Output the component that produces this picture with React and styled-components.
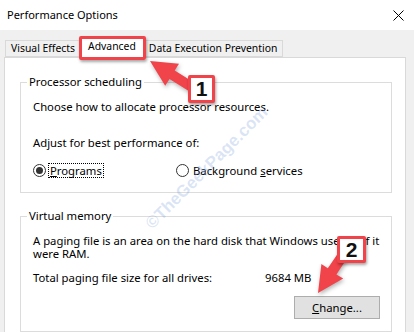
import React from 'react';
import styled, { createGlobalStyle } from 'styled-components';

const GlobalStyle = createGlobalStyle`
  html, body {
    margin: 0;
    padding: 0;
    background: #f0f0f0;
  }
  body {
    font-family: "Segoe UI", "Noto Sans", "Liberation Sans", sans-serif;
    font-size: 11.3px;
    color: #000;
  }
`;

const RED = '#f0434a';

const Window = styled.div`
  position: relative;
  width: 414px;
  height: 332px;
  overflow: hidden;
  display: flex;
  flex-direction: column;
  background: #f0f0f0;
`;

const TitleBar = styled.header`
  height: 30px;
  flex: none;
  display: flex;
  align-items: center;
  justify-content: space-between;
  padding: 0 10px 0 7px;
  background: #fff;
  font-size: 11px;
  line-height: 16px;
`;

const Body = styled.div`
  flex: 1;
  display: flex;
  flex-direction: column;
  padding: 7px 8px 0 4px;
`;

const TabStrip = styled.div`
  display: flex;
  align-items: flex-end;
  height: 20px;
  padding-left: 1px;
`;

const Tab = styled.div`
  position: relative;
  box-sizing: border-box;
  height: ${p => (p.$active ? '21px' : '17px')};
  margin-bottom: ${p => (p.$active ? '-1px' : '0')};
  padding: ${p => (p.$active ? '1px 7px 0' : '0 5px')};
  margin-left: ${p => (p.$active ? '-1px' : '0')};
  margin-right: ${p => (p.$active ? '-1px' : '0')};
  z-index: ${p => (p.$active ? 1 : 0)};
  border: 1px solid #d9d9d9;
  border-bottom: ${p => (p.$active ? 'none' : '1px solid #d9d9d9')};
  background: ${p => (p.$active ? '#fff' : '#f0f0f0')};
  font-size: 10.4px;
  line-height: 15px;
  white-space: nowrap;
`;

const Panel = styled.section`
  flex: 1;
  display: flex;
  flex-direction: column;
  padding: 16px 13px 0 15px;
  background: #fff;
  border: 1px solid #d9d9d9;
  border-bottom: none;
`;

const GroupBox = styled.fieldset`
  margin: ${p => p.$gap}px 0 0;
  padding: 0 11px ${p => p.$pb}px 6px;
  border: 1px solid #dcdcdc;
  min-width: 0;
`;

const GroupLegend = styled.legend`
  padding: 0 2px;
  line-height: 16px;
`;

const GroupContent = styled.div`
  padding-left: 6px;
`;

const Line = styled.div`
  margin-top: ${p => p.$mt || 0}px;
  line-height: ${p => p.$lh || 16}px;
  white-space: nowrap;
`;

const RadioRow = styled.div`
  display: flex;
  margin-top: 11px;
  height: 16px;
  align-items: center;
`;

const RadioOption = styled.label`
  display: flex;
  align-items: center;
  width: 143px;
`;

const RadioCircle = styled.span`
  box-sizing: border-box;
  width: 13px;
  height: 13px;
  border-radius: 50%;
  border: 1px solid #333;
  background: #fff;
  display: flex;
  align-items: center;
  justify-content: center;
  margin-right: 2px;

  &::after {
    content: '';
    width: 7px;
    height: 7px;
    border-radius: 50%;
    background: ${p => (p.$checked ? '#333' : 'transparent')};
  }
`;

const RadioText = styled.span`
  padding: 0 1px;
  border: 1px dotted ${p => (p.$focused ? '#000' : 'transparent')};
  line-height: 13px;
`;

const Key = styled.span`
  text-decoration: underline;
`;

const SizeRow = styled.div`
  display: flex;
  margin-top: 10px;
  line-height: 16px;
`;

const SizeLabel = styled.span`
  width: 232px;
`;

const ButtonRow = styled.div`
  display: flex;
  justify-content: flex-end;
  margin-top: 10px;
`;

const Button = styled.button`
  box-sizing: border-box;
  width: 86px;
  height: 23px;
  background: #e1e1e1;
  border: 1px solid #adadad;
  font: inherit;
  color: #000;
  padding: 0;
`;

const Highlight = styled.div`
  position: absolute;
  left: ${p => p.$x}px;
  top: ${p => p.$y}px;
  width: ${p => p.$w}px;
  height: ${p => p.$h}px;
  box-sizing: border-box;
  border: 3px solid ${RED};
  border-radius: 2px;
  box-shadow: 1px 2px 3px rgba(0, 0, 0, 0.35);
  z-index: 5;
`;

const Badge = styled.div`
  position: absolute;
  left: ${p => p.$x}px;
  top: ${p => p.$y}px;
  width: ${p => p.$w}px;
  height: ${p => p.$h}px;
  box-sizing: border-box;
  border: 3px solid ${RED};
  border-radius: 2px;
  background: #fff;
  box-shadow: 1px 2px 3px rgba(0, 0, 0, 0.35);
  display: flex;
  align-items: center;
  justify-content: center;
  font-family: "Liberation Sans", Arial, sans-serif;
  font-weight: bold;
  font-size: 21px;
  color: #111;
  z-index: 7;
`;

const ArrowLayer = styled.svg`
  position: absolute;
  left: 0;
  top: 0;
  width: 414px;
  height: 332px;
  pointer-events: none;
  z-index: 6;
  filter: drop-shadow(1px 2px 2px rgba(0, 0, 0, 0.3));
`;

const Watermark = styled.span`
  position: absolute;
  left: 122px;
  top: 158px;
  width: 170px;
  text-align: center;
  transform: rotate(-45deg);
  font-family: "Liberation Sans", Arial, sans-serif;
  font-weight: bold;
  font-size: 17px;
  color: rgba(110, 150, 215, 0.25);
  white-space: nowrap;
  z-index: 4;
`;

function CloseIcon() {
  return (
    <svg width="11" height="11" viewBox="0 0 11 11">
      <path d="M0.5 0.5 L10.5 10.5 M10.5 0.5 L0.5 10.5" stroke="#000" strokeWidth="1" />
    </svg>
  );
}

export default function App() {
  return (
    <>
      <GlobalStyle />
      <Window>
        <TitleBar>
          <span>Performance Options</span>
          <CloseIcon />
        </TitleBar>
        <Body>
          <TabStrip>
            <Tab>Visual Effects</Tab>
            <Tab $active>Advanced</Tab>
            <Tab>Data Execution Prevention</Tab>
          </TabStrip>
          <Panel>
            <GroupBox $gap={0} $pb={14}>
              <GroupLegend>Processor scheduling</GroupLegend>
              <GroupContent>
                <Line $mt={9}>Choose how to allocate processor resources.</Line>
                <Line $mt={20}>Adjust for best performance of:</Line>
                <RadioRow>
                  <RadioOption>
                    <RadioCircle $checked />
                    <RadioText $focused><Key>P</Key>rograms</RadioText>
                  </RadioOption>
                  <RadioOption>
                    <RadioCircle />
                    <RadioText>Background <Key>s</Key>ervices</RadioText>
                  </RadioOption>
                </RadioRow>
              </GroupContent>
            </GroupBox>
            <GroupBox $gap={15} $pb={12}>
              <GroupLegend>Virtual memory</GroupLegend>
              <GroupContent>
                <Line $mt={10} $lh={13}>A paging file is an area on the hard disk that Windows uses as if it</Line>
                <Line $lh={13}>were RAM.</Line>
                <SizeRow>
                  <SizeLabel>Total paging file size for all drives:</SizeLabel>
                  <span>9684 MB</span>
                </SizeRow>
                <ButtonRow>
                  <Button><Key>C</Key>hange...</Button>
                </ButtonRow>
              </GroupContent>
            </GroupBox>
          </Panel>
        </Body>

        <Watermark>©TheGeekPage.com</Watermark>

        <Highlight $x={79} $y={36} $w={67} $h={24} />
        <ArrowLayer viewBox="0 0 414 332">
          <polygon
            fill={RED}
            points="150,61 179,63.7 174.7,70.5 203.6,88.4 198.4,96.9 169.5,79 165.2,85.8"
          />
          <polygon
            fill={RED}
            points="318,293 321.4,264.1 327.8,268.2 344,244.4 352.6,250 336.4,274.4 343.2,278.5"
          />
        </ArrowLayer>
        <Badge $x={188} $y={75} $w={27} $h={28}>1</Badge>
        <Badge $x={337} $y={236} $w={29} $h={27}>2</Badge>
      </Window>
    </>
  );
}
